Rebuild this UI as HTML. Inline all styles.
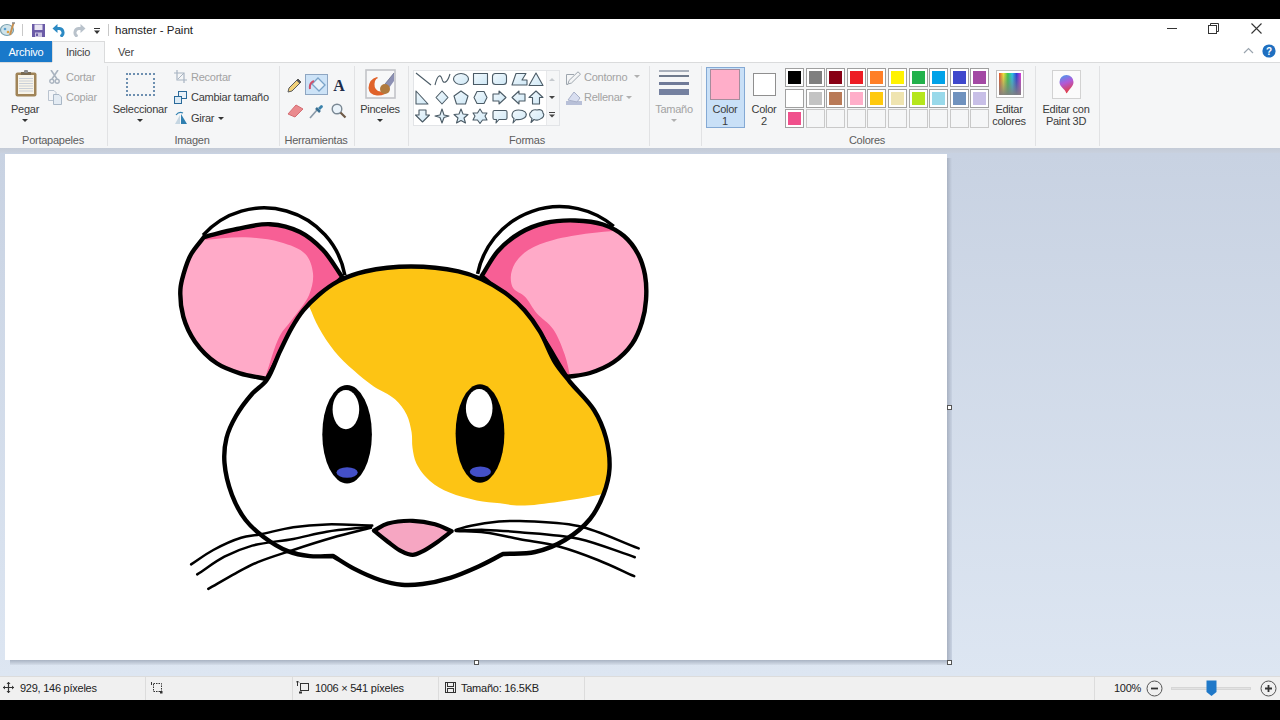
<!DOCTYPE html>
<html><head><meta charset="utf-8">
<style>
*{margin:0;padding:0;box-sizing:border-box}
html,body{width:1280px;height:720px;overflow:hidden;background:#000}
body{position:relative;font-family:"Liberation Sans",sans-serif;font-size:11px;color:#3b3b3b}
.a{position:absolute}
.t{position:absolute;white-space:nowrap;line-height:14px;height:14px;letter-spacing:-0.25px}
.c{text-align:center}
.dis{color:#a3a3a3}
.lbl{color:#5d5d5d}
.sep{position:absolute;width:1px;background:#e1e2e4;top:66px;height:80px}
.arr{position:absolute;width:0;height:0;border-left:3px solid transparent;border-right:3px solid transparent;border-top:3px solid #333}
.sw{position:absolute;width:19px;height:19px;border:1px solid #a0a0a0;background:#fff}
.sw i{position:absolute;left:2px;top:2px;right:2px;bottom:2px;display:block}
</style></head><body>
<!-- title bar -->
<div class="a" style="left:0;top:19px;width:1280px;height:22px;background:#fff"></div>
<!-- tabs row -->
<div class="a" style="left:0;top:41px;width:1280px;height:22px;background:#fff;border-bottom:1px solid #dadbdc"></div>
<div class="a" style="left:0;top:41px;width:52px;height:21px;background:#1979ca"></div>
<div class="t c" style="left:0;top:45px;width:52px;color:#fff">Archivo</div>
<div class="a" style="left:52px;top:41px;width:53px;height:23px;background:#f5f6f7;border:1px solid #dadbdc;border-bottom:none"></div>
<div class="t c" style="left:52px;top:45px;width:52px;color:#444">Inicio</div>
<div class="t c" style="left:104px;top:45px;width:44px;color:#444">Ver</div>
<!-- ribbon -->
<div class="a" style="left:0;top:63px;width:1280px;height:85px;background:#f5f6f7"></div>
<div class="a" style="left:52px;top:62px;width:50px;height:1px;background:#f5f6f7"></div>
<!-- band -->
<div class="a" style="left:0;top:148px;width:1280px;height:6px;background:#c9d0dc"></div>
<!-- canvas area -->
<div class="a" style="left:0;top:153px;width:1280px;height:523px;background:linear-gradient(#c8d2e2,#dde6f2)"></div>
<div class="a" style="left:0;top:148px;width:1280px;height:5px;background:linear-gradient(#c4cbd7,#c9d1de)"></div>
<div class="a" style="left:947px;top:158px;width:5px;height:507px;background:linear-gradient(90deg,#a9b2c2,#c8d2e2)"></div>
<div class="a" style="left:10px;top:660px;width:942px;height:5px;background:linear-gradient(#a9b3c3,#d5deea)"></div>
<div class="a" style="left:5px;top:154px;width:942px;height:506px;background:#fff"></div>
<div class="a" style="left:947px;top:405px;width:5px;height:5px;border:1px solid #555;background:#fff"></div>
<div class="a" style="left:474px;top:660px;width:5px;height:5px;border:1px solid #555;background:#fff"></div>
<div class="a" style="left:947px;top:660px;width:5px;height:5px;border:1px solid #555;background:#fff"></div>
<!-- status bar -->
<div class="a" style="left:0;top:676px;width:1280px;height:24px;background:#f0f0f0;border-top:1px solid #dcdcdc"></div>
<div class="a" style="left:0;top:700px;width:1280px;height:20px;background:#000"></div>
<!-- title bar content -->
<svg class="a" style="left:0;top:21px" width="16" height="16" viewBox="0 0 16 16"><ellipse cx="7" cy="9" rx="6.5" ry="5.5" fill="#cfe3ea" stroke="#7aa0ae" stroke-width="1.2"/><circle cx="5" cy="8" r="1.3" fill="#5aa0d0"/><circle cx="8" cy="11" r="1.3" fill="#e0a040"/><path d="M10 14 L13.5 2" stroke="#c89050" stroke-width="2"/><path d="M12 2 L15 2" stroke="#888" stroke-width="1.5"/></svg>
<div class="a" style="left:22px;top:24px;width:1px;height:12px;background:#c8c8c8"></div>
<svg class="a" style="left:32px;top:24px" width="13" height="13" viewBox="0 0 13 13"><rect x="0" y="0" width="13" height="13" fill="#6b5ba7"/><rect x="2.5" y="0.5" width="8" height="5.5" fill="#e8e4f2"/><rect x="3" y="8.5" width="7" height="4.5" fill="#c9c2e0"/><rect x="4" y="9.5" width="2" height="2.5" fill="#6b5ba7"/></svg>
<svg class="a" style="left:52px;top:23px" width="14" height="14" viewBox="0 0 14 14"><path d="M0.5 5.5 L5.5 1 V10Z" fill="#2c8ac4"/><path d="M4 5.5 H7.5 A4.2 4.2 0 0 1 8.5 13.5" stroke="#2c8ac4" stroke-width="3" fill="none"/></svg>
<svg class="a" style="left:72px;top:23px" width="14" height="14" viewBox="0 0 14 14"><path d="M13.5 5.5 L8.5 1 V10Z" fill="#b9c2cb"/><path d="M10 5.5 H6.5 A4.2 4.2 0 0 0 5.5 13.5" stroke="#b9c2cb" stroke-width="3" fill="none"/></svg>
<svg class="a" style="left:93px;top:27px" width="8" height="8" viewBox="0 0 8 8"><rect x="1" y="1" width="6" height="1" fill="#333"/><path d="M1 3.5 H7 L4 7Z" fill="#333"/></svg>
<div class="a" style="left:108px;top:24px;width:1px;height:12px;background:#c8c8c8"></div>
<div class="t" style="left:115px;top:23px;font-size:11.5px;color:#222;letter-spacing:0">hamster - Paint</div>
<!-- window controls -->
<div class="a" style="left:1167px;top:28px;width:10px;height:1px;background:#333"></div>
<svg class="a" style="left:1208px;top:23px" width="11" height="11" viewBox="0 0 11 11"><rect x="0.5" y="2.5" width="8" height="8" fill="none" stroke="#333"/><path d="M2.5 2.5 V0.5 H10.5 V8.5 H8.5" fill="none" stroke="#333"/></svg>
<svg class="a" style="left:1251px;top:23px" width="11" height="11" viewBox="0 0 11 11"><path d="M0.5 0.5 L10.5 10.5 M10.5 0.5 L0.5 10.5" stroke="#333" stroke-width="1.1"/></svg>
<svg class="a" style="left:1243px;top:47px" width="11" height="7" viewBox="0 0 11 7"><path d="M1 6 L5.5 1.5 L10 6" fill="none" stroke="#9aa4ae" stroke-width="1.2"/></svg>
<svg class="a" style="left:1262px;top:44px" width="14" height="14" viewBox="0 0 14 14"><circle cx="7" cy="7" r="6.6" fill="#1f6fc0"/><text x="7" y="11" font-family="Liberation Sans" font-weight="bold" font-size="10" fill="#fff" text-anchor="middle">?</text></svg>
<!-- ribbon separators -->
<div class="sep" style="left:107px"></div>
<div class="sep" style="left:279px"></div>
<div class="sep" style="left:354px"></div>
<div class="sep" style="left:408px"></div>
<div class="sep" style="left:649px"></div>
<div class="sep" style="left:701px"></div>
<div class="sep" style="left:1035px"></div>
<div class="sep" style="left:1099px"></div>
<!-- group labels -->
<div class="t c lbl" style="left:3px;top:133px;width:100px">Portapapeles</div>
<div class="t c lbl" style="left:142px;top:133px;width:100px">Imagen</div>
<div class="t c lbl" style="left:266px;top:133px;width:100px">Herramientas</div>
<div class="t c lbl" style="left:477px;top:133px;width:100px">Formas</div>
<div class="t c lbl" style="left:817px;top:133px;width:100px">Colores</div>
<!-- Portapapeles -->
<svg class="a" style="left:14px;top:70px" width="24" height="28" viewBox="0 0 24 28"><rect x="1.5" y="2.5" width="21" height="24" rx="2" fill="#a08458"/><rect x="4" y="5" width="16" height="19" fill="#f7f3e8"/><path d="M5 8.5 H19 M5 11 H19 M5 13.5 H19 M5 16 H19 M5 18.5 H19 M5 21 H19" stroke="#c9cfd8" stroke-width="1"/><rect x="7" y="2" width="10" height="3" fill="#7a6a50"/><rect x="10" y="0" width="4" height="3" rx="1" fill="#8a8a8a"/></svg>
<div class="t c" style="left:0;top:102px;width:50px">Pegar</div>
<div class="arr" style="left:22px;top:119px"></div>
<svg class="a" style="left:49px;top:70px" width="11" height="14" viewBox="0 0 11 14"><path d="M2 0 L8 9 M9 0 L3 9" stroke="#a9b3bf" stroke-width="1.6"/><circle cx="2.8" cy="11.2" r="2" fill="none" stroke="#a9b3bf" stroke-width="1.4"/><circle cx="8.2" cy="11.2" r="2" fill="none" stroke="#a9b3bf" stroke-width="1.4"/></svg>
<div class="t dis" style="left:66px;top:70px">Cortar</div>
<svg class="a" style="left:48px;top:90px" width="14" height="15" viewBox="0 0 14 15"><path d="M0.5 0.5 H6 L8 2.5 V10.5 H0.5Z" fill="#f3f5f8" stroke="#b9c3cf"/><path d="M5.5 4.5 H11 L13.5 7 V14.5 H5.5Z" fill="#e3ebf3" stroke="#a9b7c6"/></svg>
<div class="t dis" style="left:66px;top:90px">Copiar</div>
<!-- Imagen -->
<div class="a" style="left:126px;top:73px;width:29px;height:23px;border:2px dotted #6d8fb0"></div>
<div class="t c" style="left:100px;top:102px;width:80px">Seleccionar</div>
<div class="arr" style="left:137px;top:119px"></div>
<svg class="a" style="left:174px;top:70px" width="13" height="13" viewBox="0 0 13 13"><path d="M3 0 V10 H13 M0 3 H10 V13" fill="none" stroke="#a8b4c2" stroke-width="1.2"/><path d="M4 9 L10 3" stroke="#a8b4c2" stroke-width="1"/></svg>
<div class="t dis" style="left:191px;top:70px">Recortar</div>
<svg class="a" style="left:174px;top:91px" width="13" height="13" viewBox="0 0 13 13"><rect x="4.5" y="0.5" width="8" height="7" fill="#e9f1f8" stroke="#2a6a9a"/><rect x="0.5" y="5.5" width="7" height="7" fill="#ddebf5" stroke="#2a6a9a"/></svg>
<div class="t" style="left:191px;top:90px">Cambiar tamaño</div>
<svg class="a" style="left:174px;top:111px" width="14" height="14" viewBox="0 0 14 14"><path d="M7 3 L13 13 H7Z" fill="#2f7fb0"/><path d="M6 4 L1 13 H6Z" fill="#c5d6e2"/><path d="M2 4 Q5 0 9 2" fill="none" stroke="#2f7fb0" stroke-width="1.2"/></svg>
<div class="t" style="left:191px;top:111px">Girar</div>
<div class="arr" style="left:218px;top:117px"></div>
<!-- Herramientas -->
<svg class="a" style="left:287px;top:78px" width="15" height="15" viewBox="0 0 15 15"><path d="M1 14 L2 10 L11 1 L14 4 L5 13Z" fill="#f2d27a" stroke="#5a5a5a" stroke-width="1"/><path d="M11 1 L14 4 L12.5 5.5 L9.5 2.5Z" fill="#555"/></svg>
<div class="a" style="left:305px;top:74px;width:23px;height:21px;background:#cde3f7;border:1px solid #8ea6c2"></div>
<svg class="a" style="left:308px;top:77px" width="18" height="16" viewBox="0 0 18 16"><path d="M10 1 L17 8 L11 14 L4 7Z" fill="#e8f2fa" stroke="#7aa3c8" stroke-width="1.3"/><path d="M2 12 Q1 6 6 4" fill="none" stroke="#d0506a" stroke-width="2"/></svg>
<svg class="a" style="left:332px;top:78px" width="14" height="13" viewBox="0 0 14 13"><text x="7" y="12.5" font-family="Liberation Serif" font-weight="bold" font-size="16" fill="#1e2d4a" text-anchor="middle">A</text></svg>
<svg class="a" style="left:287px;top:104px" width="17" height="14" viewBox="0 0 17 14"><path d="M1 10 L9 1 L16 5 L8 13Z" fill="#ea8a8e" stroke="#d46c72" stroke-width="1"/></svg>
<svg class="a" style="left:309px;top:103px" width="16" height="16" viewBox="0 0 16 16"><path d="M1 15 L8 7" stroke="#8a9aa8" stroke-width="1.6"/><path d="M7 5 L11 9" stroke="#3a6f92" stroke-width="2.5"/><path d="M9 5 L12 2 A2 2 0 0 1 14 4 L11 7Z" fill="#3b82ab"/></svg>
<svg class="a" style="left:331px;top:103px" width="16" height="16" viewBox="0 0 16 16"><circle cx="6" cy="6" r="4.8" fill="#eaf3fa" stroke="#7a8894" stroke-width="1.4"/><path d="M9.5 9.5 L14.5 14.5" stroke="#6e5a48" stroke-width="2.2"/></svg>
<!-- Pinceles -->
<svg class="a" style="left:365px;top:69px" width="31" height="30" viewBox="0 0 31 30"><rect x="1" y="1" width="29" height="28" fill="#f7f8f9" stroke="#c2c4c8" stroke-width="1.6"/><path d="M29 4 L20 15 L24 19 L29 12Z" fill="#8c90b4"/><path d="M29 4 L20 15" stroke="#6a708c" stroke-width="0.8"/><path d="M12 8 Q4 10 3.5 19 Q4 26 12 26.5 Q20 27 24 21 Q19 24 13 22 Q8 19 10 12 Q11 9.5 13 9Z" fill="#e0622a"/><circle cx="20" cy="20" r="5" fill="#b07a3e"/></svg>
<div class="t c" style="left:350px;top:102px;width:60px">Pinceles</div>
<div class="arr" style="left:377px;top:119px"></div>
<!-- Formas gallery -->
<div class="a" style="left:413px;top:70px;width:147px;height:56px;border:1px solid #e2e4e7;background:#fff"></div>
<div class="a" style="left:546px;top:71px;width:13px;height:54px;background:#f5f6f7;border-left:1px solid #e8e9eb"></div>
<svg class="a" style="left:414px;top:70px" width="146" height="56" viewBox="0 0 146 56">
<defs><linearGradient id="sg" x1="0" y1="0" x2="1" y2="1"><stop offset="0" stop-color="#f2f9fd"/><stop offset="1" stop-color="#cfe8f6"/></linearGradient></defs>
<g fill="url(#sg)" stroke="#4b5b66" stroke-width="1.1" stroke-linejoin="round">
<path d="M2 3 L17 15" fill="none"/>
<path d="M21 15 C24 3 27 5 28 9 C29 14 33 14 36 4" fill="none"/>
<ellipse cx="47" cy="9" rx="7.5" ry="5.5"/>
<rect x="59.5" y="3.5" width="14" height="11"/>
<rect x="78.5" y="3.5" width="14" height="11" rx="3"/>
<path d="M98 15 L102 3.5 H112 L108 10 H113 V15Z"/>
<path d="M115 15.5 L122 3 L129 15.5Z"/>
<path d="M2 21 L2 34 L14 34Z"/>
<path d="M28 21 L34 27.5 L28 34 L22 27.5Z"/>
<path d="M47 21 L54 26 L51.5 34 L42.5 34 L40 26Z"/>
<path d="M62 21.5 L69 21.5 L72 27.5 L69 33.5 L62 33.5 L59 27.5Z" transform="translate(1,0)"/>
<path d="M79 24 H85 V21 L92 27.5 L85 34 V31 H79Z"/>
<path d="M111 24 H105 V21 L98 27.5 L105 34 V31 H111Z"/>
<path d="M122 21 L129 27.5 H125.5 V34 H118.5 V27.5 H115Z"/>
<path d="M5 40 H12 V45 H15.5 L8.5 52 L1.5 45 H5Z"/>
<path d="M28 39 L30 45 L35 46 L30 47.5 L28 53 L26 47.5 L21 46 L26 45Z"/>
<path d="M47 39 L49 44 L54 44.5 L50 48 L51.5 53 L47 50.5 L42.5 53 L44 48 L40 44.5 L45 44Z"/>
<path d="M66 39 L68.5 43 L73 43 L71 46 L73 50 L68.5 50 L66 53.5 L63.5 50 L59 50 L61 46 L59 43 L63.5 43Z"/>
<path d="M80.5 40.5 H91.5 Q93 40.5 93 42 V48 Q93 49.5 91.5 49.5 H85 L82 53 L82.5 49.5 H80.5 Q79 49.5 79 48 V42 Q79 40.5 80.5 40.5Z"/>
<path d="M104.5 40 C111 40 113 43 112 46 C111 49 106 50 102 49.5 L99 53 L100 48.5 C97 47 97 40 104.5 40Z"/>
<path d="M123 40 C126 39 129 40 129 43 C131 45 129 48 127 48.5 C125 51 121 50 120 49.5 L117 52.5 L118 48.5 C115 47 115 43 117 42 C118 40 121 39.5 123 40Z"/>
</g>
<path d="M135 11 L138 8 L141 11Z" fill="#c5c9ce"/>
<path d="M135 26 L141 26 L138 29Z" fill="#444"/>
<rect x="135" y="42" width="6" height="1" fill="#444"/><path d="M135 44.5 L141 44.5 L138 47.5Z" fill="#444"/>
</svg>
<!-- Contorno / Rellenar -->
<svg class="a" style="left:566px;top:71px" width="15" height="14" viewBox="0 0 15 14"><path d="M0.5 13.5 V3.5 H8 M0.5 13.5 H2" fill="none" stroke="#9ea6ae" stroke-width="1"/><path d="M2 13 L3 9.5 L12 0.8 L14.5 3.2 L5.5 12Z" fill="#f4f5f6" stroke="#9ea6ae" stroke-width="1"/></svg>
<div class="t dis" style="left:584px;top:70px">Contorno</div>
<div class="arr" style="left:634px;top:75px;border-top-color:#b0b0b0"></div>
<svg class="a" style="left:566px;top:90px" width="16" height="15" viewBox="0 0 16 15"><rect x="0" y="11" width="16" height="4" fill="#b8c0d8"/><path d="M2 10 L8 2 L14 8 L11 12Z" fill="#d8def0" stroke="#a8b0c8" stroke-width="1"/></svg>
<div class="t dis" style="left:584px;top:90px">Rellenar</div>
<div class="arr" style="left:626px;top:96px;border-top-color:#b0b0b0"></div>
<!-- Tamaño -->
<div class="a" style="left:659px;top:70px;width:30px;height:2px;background:#a9b0bb"></div>
<div class="a" style="left:659px;top:75px;width:30px;height:2px;background:#6f7a8c"></div>
<div class="a" style="left:659px;top:82px;width:30px;height:3px;background:#6f7a98"></div>
<div class="a" style="left:659px;top:89px;width:30px;height:6px;background:#7581a0"></div>
<div class="t c dis" style="left:644px;top:102px;width:60px">Tamaño</div>
<div class="arr" style="left:671px;top:119px;border-top-color:#b0b0b0"></div>
<!-- Color 1 / 2 -->
<div class="a" style="left:706px;top:67px;width:39px;height:61px;background:#c9e0f7;border:1px solid #84a9d4"></div>
<div class="a" style="left:710px;top:69px;width:30px;height:31px;background:#ffaec9;border:1px solid #a68c9c"></div>
<div class="t c" style="left:700px;top:102px;width:50px">Color</div>
<div class="t c" style="left:700px;top:114px;width:50px">1</div>
<div class="a" style="left:753px;top:73px;width:23px;height:23px;background:#fff;border:1px solid #8f8f8f"></div>
<div class="t c" style="left:739px;top:102px;width:50px">Color</div>
<div class="t c" style="left:739px;top:114px;width:50px">2</div>
<div class="sw" style="left:785px;top:68px"><i style="background:#000000"></i></div>
<div class="sw" style="left:806px;top:68px"><i style="background:#7f7f7f"></i></div>
<div class="sw" style="left:826px;top:68px"><i style="background:#880015"></i></div>
<div class="sw" style="left:847px;top:68px"><i style="background:#ed1c24"></i></div>
<div class="sw" style="left:867px;top:68px"><i style="background:#ff7f27"></i></div>
<div class="sw" style="left:888px;top:68px"><i style="background:#fff200"></i></div>
<div class="sw" style="left:909px;top:68px"><i style="background:#22b14c"></i></div>
<div class="sw" style="left:929px;top:68px"><i style="background:#00a2e8"></i></div>
<div class="sw" style="left:950px;top:68px"><i style="background:#3f48cc"></i></div>
<div class="sw" style="left:970px;top:68px"><i style="background:#a349a4"></i></div>
<div class="sw" style="left:785px;top:89px"><i style="background:#ffffff"></i></div>
<div class="sw" style="left:806px;top:89px"><i style="background:#c3c3c3"></i></div>
<div class="sw" style="left:826px;top:89px"><i style="background:#b97a57"></i></div>
<div class="sw" style="left:847px;top:89px"><i style="background:#ffaec9"></i></div>
<div class="sw" style="left:867px;top:89px"><i style="background:#ffc90e"></i></div>
<div class="sw" style="left:888px;top:89px"><i style="background:#efe4b0"></i></div>
<div class="sw" style="left:909px;top:89px"><i style="background:#b5e61d"></i></div>
<div class="sw" style="left:929px;top:89px"><i style="background:#99d9ea"></i></div>
<div class="sw" style="left:950px;top:89px"><i style="background:#7092be"></i></div>
<div class="sw" style="left:970px;top:89px"><i style="background:#c8bfe7"></i></div>
<div class="sw" style="left:785px;top:109px"><i style="background:#f0508c"></i></div>
<div class="sw" style="left:806px;top:109px;background:#f5f6f7;border-color:#c9c9c9"></div>
<div class="sw" style="left:826px;top:109px;background:#f5f6f7;border-color:#c9c9c9"></div>
<div class="sw" style="left:847px;top:109px;background:#f5f6f7;border-color:#c9c9c9"></div>
<div class="sw" style="left:867px;top:109px;background:#f5f6f7;border-color:#c9c9c9"></div>
<div class="sw" style="left:888px;top:109px;background:#f5f6f7;border-color:#c9c9c9"></div>
<div class="sw" style="left:909px;top:109px;background:#f5f6f7;border-color:#c9c9c9"></div>
<div class="sw" style="left:929px;top:109px;background:#f5f6f7;border-color:#c9c9c9"></div>
<div class="sw" style="left:950px;top:109px;background:#f5f6f7;border-color:#c9c9c9"></div>
<div class="sw" style="left:970px;top:109px;background:#f5f6f7;border-color:#c9c9c9"></div>
<!-- Editar colores -->
<svg class="a" style="left:996px;top:70px" width="28" height="28" viewBox="0 0 28 28"><defs><linearGradient id="rb" x1="0" y1="0" x2="1" y2="0"><stop offset="0" stop-color="#e34b2a"/><stop offset="0.2" stop-color="#f2e23a"/><stop offset="0.4" stop-color="#3ac84a"/><stop offset="0.6" stop-color="#29c4e8"/><stop offset="0.8" stop-color="#2b3ad8"/><stop offset="1" stop-color="#e23ad8"/></linearGradient><linearGradient id="gr" x1="0" y1="0" x2="0" y2="1"><stop offset="0" stop-color="#808080" stop-opacity="0"/><stop offset="1" stop-color="#808080" stop-opacity="0.95"/></linearGradient></defs><rect x="0.5" y="0.5" width="27" height="27" fill="#fff" stroke="#c0c0c0"/><rect x="3" y="3" width="22" height="22" fill="url(#rb)"/><rect x="3" y="3" width="22" height="22" fill="url(#gr)"/></svg>
<div class="t c" style="left:979px;top:102px;width:60px">Editar</div>
<div class="t c" style="left:979px;top:114px;width:60px">colores</div>
<!-- Paint 3D -->
<svg class="a" style="left:1052px;top:70px" width="29" height="29" viewBox="0 0 29 29"><defs><linearGradient id="p3" x1="0" y1="0" x2="0.3" y2="1"><stop offset="0" stop-color="#3fa0f0"/><stop offset="0.5" stop-color="#b05ad8"/><stop offset="1" stop-color="#e04050"/></linearGradient></defs><rect x="0.5" y="0.5" width="28" height="28" fill="#fbfbfb" stroke="#d2d2d2"/><path d="M14.5 5 A7 7 0 0 1 21.5 12 C21.5 16 18 18 15 23 C14.5 23.5 14 23 14 22.5 C13 19 7.5 17 7.5 12 A7 7 0 0 1 14.5 5Z" fill="url(#p3)"/></svg>
<div class="t c" style="left:1036px;top:102px;width:60px">Editar con</div>
<div class="t c" style="left:1036px;top:114px;width:60px">Paint 3D</div>
<!-- status bar -->
<svg class="a" style="left:3px;top:682px" width="11" height="11" viewBox="0 0 11 11"><path d="M5.5 0 V11 M0 5.5 H11" stroke="#333" stroke-width="1.2"/><path d="M5.5 0 L3.5 2 H7.5Z M5.5 11 L3.5 9 H7.5Z M0 5.5 L2 3.5 V7.5Z M11 5.5 L9 3.5 V7.5Z" fill="#333"/></svg>
<div class="t" style="left:20px;top:681px;color:#222">929, 146 píxeles</div>
<div class="a" style="left:145px;top:677px;width:1px;height:23px;background:#dcdcdc"></div>
<svg class="a" style="left:151px;top:682px" width="12" height="12" viewBox="0 0 12 12"><path d="M0.5 0 V3" stroke="#333"/><rect x="2.5" y="1.5" width="8" height="8" fill="none" stroke="#333" stroke-dasharray="1.5 1"/><rect x="9" y="9" width="2.5" height="2.5" fill="#333"/></svg>
<div class="a" style="left:292px;top:677px;width:1px;height:23px;background:#dcdcdc"></div>
<svg class="a" style="left:296px;top:681px" width="14" height="13" viewBox="0 0 14 13"><path d="M1.5 0 V5 M0 1.5 L1.5 0 L3 1.5" fill="none" stroke="#333"/><rect x="4.5" y="2.5" width="8" height="7" fill="none" stroke="#333"/><rect x="3" y="10.5" width="3" height="2" fill="#333"/></svg>
<div class="t" style="left:315px;top:681px;color:#222">1006 × 541 píxeles</div>
<div class="a" style="left:438px;top:677px;width:1px;height:23px;background:#dcdcdc"></div>
<svg class="a" style="left:445px;top:682px" width="11" height="11" viewBox="0 0 11 11"><rect x="0.5" y="0.5" width="10" height="10" fill="none" stroke="#333"/><rect x="2.5" y="0.5" width="6" height="4" fill="none" stroke="#333"/><rect x="2.5" y="6.5" width="6" height="4" fill="none" stroke="#333"/></svg>
<div class="t" style="left:461px;top:681px;color:#222">Tamaño: 16.5KB</div>
<div class="a" style="left:584px;top:677px;width:1px;height:23px;background:#dcdcdc"></div>
<div class="a" style="left:1094px;top:677px;width:1px;height:23px;background:#dcdcdc"></div>
<div class="t" style="left:1114px;top:681px;color:#222">100%</div>
<svg class="a" style="left:1146px;top:680px" width="17" height="17" viewBox="0 0 17 17"><circle cx="8.5" cy="8.5" r="7.5" fill="none" stroke="#555" stroke-width="1"/><path d="M5 8.5 H12" stroke="#333" stroke-width="1.8"/></svg>
<div class="a" style="left:1171px;top:687px;width:80px;height:3px;background:#e2e2e2;border:1px solid #d6d6d6"></div>
<svg class="a" style="left:1206px;top:680px" width="11" height="17" viewBox="0 0 11 17"><path d="M0.5 0.5 H10.5 V12 L5.5 16 L0.5 12Z" fill="#1f78c8"/></svg>
<svg class="a" style="left:1260px;top:680px" width="17" height="17" viewBox="0 0 17 17"><circle cx="8.5" cy="8.5" r="7.5" fill="none" stroke="#555" stroke-width="1"/><path d="M5 8.5 H12 M8.5 5 V12" stroke="#333" stroke-width="1.8"/></svg>
<div id="hamster"><svg class="a" style="left:0;top:0" width="1280" height="720" viewBox="0 0 1280 720">
<defs><clipPath id="hc"><path d="M503.0,554.0 C494.7,558.2 486.6,562.8 478.0,566.7 C469.1,570.7 459.7,574.9 450.3,577.8 C441.2,580.6 431.1,582.9 422.5,584.0 C415.1,584.9 408.7,585.3 401.7,584.7 C394.5,584.1 387.4,582.4 380.0,580.0 C371.7,577.3 362.4,573.0 354.4,568.9 C346.8,565.0 340.1,560.3 333.0,556.0 C325.3,556.0 317.6,556.9 310.0,556.1 C302.5,555.3 295.2,554.0 287.8,551.1 C279.6,547.9 270.5,542.1 263.3,536.7 C256.6,531.7 250.7,526.6 245.6,520.0 C240.1,512.9 235.5,504.1 232.0,495.0 C228.3,485.2 225.3,473.1 224.5,463.0 C223.8,454.2 224.5,445.9 226.5,438.0 C228.4,430.3 231.9,423.1 236.0,416.0 C240.3,408.4 246.5,400.3 252.0,394.0 C256.8,388.6 262.4,386.0 266.7,380.0 C272.1,372.5 275.6,360.3 280.0,351.2 C284.0,343.0 287.6,334.9 291.7,327.8 C295.4,321.4 298.8,315.8 303.3,310.3 C307.9,304.7 313.2,299.5 318.9,294.7 C324.8,289.7 331.1,284.9 338.4,281.1 C346.3,277.0 354.8,273.9 365.0,271.5 C378.1,268.5 395.5,266.5 411.0,266.5 C426.7,266.5 445.5,268.6 458.4,271.4 C467.7,273.4 474.1,275.8 481.7,279.2 C489.7,282.8 497.8,287.6 505.0,292.8 C512.1,298.0 518.7,303.8 524.5,310.3 C530.3,316.8 535.2,323.7 540.0,331.7 C545.5,340.8 549.5,353.4 555.0,362.3 C559.7,369.8 564.3,374.9 570.0,382.0 C577.0,390.6 587.9,400.2 594.0,410.0 C599.6,418.9 603.4,428.3 606.0,438.0 C608.6,447.8 610.0,458.9 609.5,468.6 C609.0,477.5 606.8,485.7 603.7,493.9 C600.4,502.5 596.1,511.5 590.0,519.0 C583.5,527.0 574.2,534.5 565.0,540.0 C555.9,545.5 545.4,549.7 535.0,552.0 C524.7,554.3 513.7,553.3 503.0,554.0Z"/></clipPath><clipPath id="lec"><path d="M204.0,237.0 C215.0,234.3 225.9,231.1 237.0,229.0 C248.0,226.9 259.3,223.6 270.0,224.2 C280.3,224.8 291.1,227.6 300.0,232.0 C308.7,236.3 316.1,242.8 323.0,250.0 C330.3,257.7 335.9,268.1 342.3,277.2 C328.2,291.5 312.3,303.7 300.0,320.0 C286.9,337.3 277.8,359.3 266.7,379.0 C257.8,377.1 248.5,376.0 240.0,373.3 C231.8,370.7 223.9,368.2 216.7,363.3 C208.8,358.0 200.6,349.7 195.0,341.7 C189.7,334.1 185.7,325.4 183.3,316.7 C180.9,308.0 180.0,297.3 180.4,289.4 C180.7,283.2 182.3,278.4 183.9,272.8 C185.7,266.8 187.6,260.5 190.8,254.7 C194.2,248.5 199.6,242.9 204.0,237.0Z"/></clipPath><clipPath id="rec"><path d="M481.7,276.0 C487.1,267.7 491.5,258.2 498.0,251.0 C504.3,243.9 512.0,237.7 520.0,233.0 C527.7,228.4 536.1,225.1 545.0,223.0 C554.4,220.8 565.2,220.2 575.0,220.5 C584.5,220.8 594.6,221.7 603.0,224.5 C610.8,227.1 618.1,231.0 624.0,236.0 C629.7,240.9 634.5,247.4 638.0,254.0 C641.5,260.5 643.6,267.6 645.0,275.0 C646.4,282.9 646.6,292.0 646.0,300.0 C645.5,307.6 644.3,314.8 642.0,322.0 C639.7,329.5 636.6,337.4 632.0,344.0 C627.2,350.9 620.4,357.5 613.4,362.3 C606.4,367.1 598.0,370.5 590.0,373.0 C582.4,375.4 574.5,375.7 566.7,377.0 C554.5,358.0 544.3,337.0 530.0,320.0 C515.9,303.4 497.8,290.7 481.7,276.0Z"/></clipPath></defs>
<path d="M203.1,235.2 A82,82 0 0 1 344.9,275.3" fill="none" stroke="#000" stroke-width="3.5"/>
<path d="M477.6,273.9 A83.7,83.7 0 0 1 613.7,226.4" fill="none" stroke="#000" stroke-width="3.5"/>
<path d="M204.0,237.0 C215.0,234.3 225.9,231.1 237.0,229.0 C248.0,226.9 259.3,223.6 270.0,224.2 C280.3,224.8 291.1,227.6 300.0,232.0 C308.7,236.3 316.1,242.8 323.0,250.0 C330.3,257.7 335.9,268.1 342.3,277.2 C328.2,291.5 312.3,303.7 300.0,320.0 C286.9,337.3 277.8,359.3 266.7,379.0 C257.8,377.1 248.5,376.0 240.0,373.3 C231.8,370.7 223.9,368.2 216.7,363.3 C208.8,358.0 200.6,349.7 195.0,341.7 C189.7,334.1 185.7,325.4 183.3,316.7 C180.9,308.0 180.0,297.3 180.4,289.4 C180.7,283.2 182.3,278.4 183.9,272.8 C185.7,266.8 187.6,260.5 190.8,254.7 C194.2,248.5 199.6,242.9 204.0,237.0Z" fill="#f75f95"/>
<path d="M203.1,240.0 C217.2,239.1 231.9,236.8 245.3,237.3 C257.6,237.8 270.0,239.1 280.5,242.2 C289.7,244.9 299.9,248.1 305.3,253.9 C310.0,258.9 312.3,266.6 313.0,273.3 C313.7,280.2 312.1,287.6 309.2,294.7 C305.7,303.2 297.0,312.6 291.7,320.0 C287.5,325.9 283.7,328.8 280.0,335.6 C274.4,346.0 270.0,363.9 265.0,378.0 C243.3,392.0 217.8,425.5 200.0,420.0 C176.9,412.8 144.7,331.9 150.0,300.0 C154.2,275.0 185.4,260.0 203.1,240.0Z" fill="#ffaac8" clip-path="url(#lec)"/>
<path d="M204.0,237.0 C215.0,234.3 225.9,231.1 237.0,229.0 C248.0,226.9 259.3,223.6 270.0,224.2 C280.3,224.8 291.1,227.6 300.0,232.0 C308.7,236.3 316.1,242.8 323.0,250.0 C330.3,257.7 335.9,268.1 342.3,277.2 C328.2,291.5 312.3,303.7 300.0,320.0 C286.9,337.3 277.8,359.3 266.7,379.0 C257.8,377.1 248.5,376.0 240.0,373.3 C231.8,370.7 223.9,368.2 216.7,363.3 C208.8,358.0 200.6,349.7 195.0,341.7 C189.7,334.1 185.7,325.4 183.3,316.7 C180.9,308.0 180.0,297.3 180.4,289.4 C180.7,283.2 182.3,278.4 183.9,272.8 C185.7,266.8 187.6,260.5 190.8,254.7 C194.2,248.5 199.6,242.9 204.0,237.0Z" fill="none" stroke="#000" stroke-width="4.4" stroke-linejoin="round"/>
<path d="M481.7,276.0 C487.1,267.7 491.5,258.2 498.0,251.0 C504.3,243.9 512.0,237.7 520.0,233.0 C527.7,228.4 536.1,225.1 545.0,223.0 C554.4,220.8 565.2,220.2 575.0,220.5 C584.5,220.8 594.6,221.7 603.0,224.5 C610.8,227.1 618.1,231.0 624.0,236.0 C629.7,240.9 634.5,247.4 638.0,254.0 C641.5,260.5 643.6,267.6 645.0,275.0 C646.4,282.9 646.6,292.0 646.0,300.0 C645.5,307.6 644.3,314.8 642.0,322.0 C639.7,329.5 636.6,337.4 632.0,344.0 C627.2,350.9 620.4,357.5 613.4,362.3 C606.4,367.1 598.0,370.5 590.0,373.0 C582.4,375.4 574.5,375.7 566.7,377.0 C554.5,358.0 544.3,337.0 530.0,320.0 C515.9,303.4 497.8,290.7 481.7,276.0Z" fill="#f75f95"/>
<path d="M617.0,230.8 C608.0,231.6 599.7,232.0 590.0,233.3 C578.7,234.9 564.2,236.9 553.3,240.0 C544.0,242.7 535.0,245.6 528.3,250.0 C522.7,253.7 517.9,258.5 515.0,263.3 C512.5,267.5 511.0,272.4 510.8,276.7 C510.6,280.7 511.2,285.1 513.3,288.3 C515.6,291.9 521.4,293.0 525.0,296.7 C529.3,301.0 532.2,308.0 536.7,313.3 C541.5,318.8 548.5,322.6 553.0,329.0 C558.0,336.1 561.7,346.0 564.7,354.5 C567.5,362.4 568.6,370.2 570.6,378.0 C587.1,392.0 603.0,422.4 620.0,420.0 C645.4,416.4 695.9,339.2 700.0,300.0 C703.5,266.1 677.5,205.1 660.0,200.0 C647.7,196.4 631.3,220.5 617.0,230.8Z" fill="#ffaac8" clip-path="url(#rec)"/>
<path d="M481.7,276.0 C487.1,267.7 491.5,258.2 498.0,251.0 C504.3,243.9 512.0,237.7 520.0,233.0 C527.7,228.4 536.1,225.1 545.0,223.0 C554.4,220.8 565.2,220.2 575.0,220.5 C584.5,220.8 594.6,221.7 603.0,224.5 C610.8,227.1 618.1,231.0 624.0,236.0 C629.7,240.9 634.5,247.4 638.0,254.0 C641.5,260.5 643.6,267.6 645.0,275.0 C646.4,282.9 646.6,292.0 646.0,300.0 C645.5,307.6 644.3,314.8 642.0,322.0 C639.7,329.5 636.6,337.4 632.0,344.0 C627.2,350.9 620.4,357.5 613.4,362.3 C606.4,367.1 598.0,370.5 590.0,373.0 C582.4,375.4 574.5,375.7 566.7,377.0 C554.5,358.0 544.3,337.0 530.0,320.0 C515.9,303.4 497.8,290.7 481.7,276.0Z" fill="none" stroke="#000" stroke-width="4.4" stroke-linejoin="round"/>
<path d="M503.0,554.0 C494.7,558.2 486.6,562.8 478.0,566.7 C469.1,570.7 459.7,574.9 450.3,577.8 C441.2,580.6 431.1,582.9 422.5,584.0 C415.1,584.9 408.7,585.3 401.7,584.7 C394.5,584.1 387.4,582.4 380.0,580.0 C371.7,577.3 362.4,573.0 354.4,568.9 C346.8,565.0 340.1,560.3 333.0,556.0 C325.3,556.0 317.6,556.9 310.0,556.1 C302.5,555.3 295.2,554.0 287.8,551.1 C279.6,547.9 270.5,542.1 263.3,536.7 C256.6,531.7 250.7,526.6 245.6,520.0 C240.1,512.9 235.5,504.1 232.0,495.0 C228.3,485.2 225.3,473.1 224.5,463.0 C223.8,454.2 224.5,445.9 226.5,438.0 C228.4,430.3 231.9,423.1 236.0,416.0 C240.3,408.4 246.5,400.3 252.0,394.0 C256.8,388.6 262.4,386.0 266.7,380.0 C272.1,372.5 275.6,360.3 280.0,351.2 C284.0,343.0 287.6,334.9 291.7,327.8 C295.4,321.4 298.8,315.8 303.3,310.3 C307.9,304.7 313.2,299.5 318.9,294.7 C324.8,289.7 331.1,284.9 338.4,281.1 C346.3,277.0 354.8,273.9 365.0,271.5 C378.1,268.5 395.5,266.5 411.0,266.5 C426.7,266.5 445.5,268.6 458.4,271.4 C467.7,273.4 474.1,275.8 481.7,279.2 C489.7,282.8 497.8,287.6 505.0,292.8 C512.1,298.0 518.7,303.8 524.5,310.3 C530.3,316.8 535.2,323.7 540.0,331.7 C545.5,340.8 549.5,353.4 555.0,362.3 C559.7,369.8 564.3,374.9 570.0,382.0 C577.0,390.6 587.9,400.2 594.0,410.0 C599.6,418.9 603.4,428.3 606.0,438.0 C608.6,447.8 610.0,458.9 609.5,468.6 C609.0,477.5 606.8,485.7 603.7,493.9 C600.4,502.5 596.1,511.5 590.0,519.0 C583.5,527.0 574.2,534.5 565.0,540.0 C555.9,545.5 545.4,549.7 535.0,552.0 C524.7,554.3 513.7,553.3 503.0,554.0Z" fill="#fff"/>
<path d="M309.2,306.4 C312.4,313.5 314.9,320.7 318.9,327.8 C323.2,335.6 328.6,344.0 334.5,351.2 C340.3,358.3 347.3,364.7 353.9,370.6 C360.2,376.3 366.6,381.4 373.4,386.2 C380.3,391.0 389.3,394.0 395.0,399.2 C400.0,403.7 403.9,409.1 406.7,414.7 C409.4,420.1 410.6,426.6 411.6,432.3 C412.5,437.6 411.7,442.7 412.5,447.8 C413.3,453.0 413.9,458.3 416.4,463.4 C419.3,469.4 424.5,476.1 430.0,480.9 C435.5,485.8 442.2,489.4 449.5,492.6 C457.6,496.1 467.9,498.6 476.7,500.4 C484.7,502.0 492.5,502.4 500.0,503.3 C506.9,504.1 512.2,505.5 520.0,505.6 C530.8,505.7 546.0,503.5 558.9,501.7 C571.9,499.9 584.6,497.6 597.8,494.9 C611.6,492.1 625.9,488.3 640.0,485.0 C646.7,456.7 664.1,431.5 660.0,400.0 C654.3,356.1 622.1,278.6 580.0,250.0 C536.5,220.5 451.7,221.8 400.0,230.0 C357.8,236.7 294.4,263.2 290.0,280.0 C287.7,288.8 302.8,297.6 309.2,306.4Z" fill="#fdc414" clip-path="url(#hc)"/>
<path d="M503.0,554.0 C494.7,558.2 486.6,562.8 478.0,566.7 C469.1,570.7 459.7,574.9 450.3,577.8 C441.2,580.6 431.1,582.9 422.5,584.0 C415.1,584.9 408.7,585.3 401.7,584.7 C394.5,584.1 387.4,582.4 380.0,580.0 C371.7,577.3 362.4,573.0 354.4,568.9 C346.8,565.0 340.1,560.3 333.0,556.0 C325.3,556.0 317.6,556.9 310.0,556.1 C302.5,555.3 295.2,554.0 287.8,551.1 C279.6,547.9 270.5,542.1 263.3,536.7 C256.6,531.7 250.7,526.6 245.6,520.0 C240.1,512.9 235.5,504.1 232.0,495.0 C228.3,485.2 225.3,473.1 224.5,463.0 C223.8,454.2 224.5,445.9 226.5,438.0 C228.4,430.3 231.9,423.1 236.0,416.0 C240.3,408.4 246.5,400.3 252.0,394.0 C256.8,388.6 262.4,386.0 266.7,380.0 C272.1,372.5 275.6,360.3 280.0,351.2 C284.0,343.0 287.6,334.9 291.7,327.8 C295.4,321.4 298.8,315.8 303.3,310.3 C307.9,304.7 313.2,299.5 318.9,294.7 C324.8,289.7 331.1,284.9 338.4,281.1 C346.3,277.0 354.8,273.9 365.0,271.5 C378.1,268.5 395.5,266.5 411.0,266.5 C426.7,266.5 445.5,268.6 458.4,271.4 C467.7,273.4 474.1,275.8 481.7,279.2 C489.7,282.8 497.8,287.6 505.0,292.8 C512.1,298.0 518.7,303.8 524.5,310.3 C530.3,316.8 535.2,323.7 540.0,331.7 C545.5,340.8 549.5,353.4 555.0,362.3 C559.7,369.8 564.3,374.9 570.0,382.0 C577.0,390.6 587.9,400.2 594.0,410.0 C599.6,418.9 603.4,428.3 606.0,438.0 C608.6,447.8 610.0,458.9 609.5,468.6 C609.0,477.5 606.8,485.7 603.7,493.9 C600.4,502.5 596.1,511.5 590.0,519.0 C583.5,527.0 574.2,534.5 565.0,540.0 C555.9,545.5 545.4,549.7 535.0,552.0 C524.7,554.3 513.7,553.3 503.0,554.0Z" fill="none" stroke="#000" stroke-width="4.4" stroke-linejoin="round"/>
<ellipse cx="347.1" cy="434.2" rx="24.8" ry="49.2" fill="#000"/>
<ellipse cx="480" cy="433.5" rx="24.4" ry="49.2" fill="#000"/>
<ellipse cx="345.9" cy="409.6" rx="13.3" ry="19.6" fill="#fff"/>
<ellipse cx="479.2" cy="408.4" rx="13.3" ry="19.3" fill="#fff"/>
<ellipse cx="347.1" cy="472.5" rx="10.6" ry="5.2" fill="#4450c8"/>
<ellipse cx="480.4" cy="471.7" rx="10.6" ry="5.2" fill="#4450c8"/>
<path d="M373.9,530.6 C378.5,528.3 382.3,525.2 387.8,523.6 C394.8,521.5 404.7,520.6 412.8,520.8 C420.4,521.0 428.2,522.4 435.0,524.3 C441.1,526.0 446.1,528.9 451.7,531.2 C447.1,534.7 442.6,538.4 437.8,541.7 C432.9,545.1 427.1,549.1 422.5,551.4 C419.0,553.1 416.2,554.8 412.8,554.9 C409.2,555.0 405.5,553.3 401.7,551.4 C397.2,549.2 392.4,545.1 387.8,541.7 C383.1,538.2 378.5,534.3 373.9,530.6Z" fill="#f6a6c2" stroke="#000" stroke-width="4.2" stroke-linejoin="round"/>
<path d="M372.2,525.6 C357.0,525.2 340.7,524.0 326.7,524.4 C314.7,524.7 304.4,525.5 293.3,527.2 C282.1,528.9 269.6,532.5 260.0,534.4 C252.8,535.8 247.9,535.7 241.1,537.8 C232.6,540.4 221.9,545.4 213.3,550.0 C205.3,554.3 198.5,559.6 191.1,564.4" fill="none" stroke="#000" stroke-width="2.5" stroke-linecap="round"/>
<path d="M371.0,526.7 C356.2,528.4 340.4,529.5 326.7,531.7 C314.7,533.7 305.0,536.7 293.3,538.9 C280.3,541.4 264.4,542.2 252.2,545.6 C241.9,548.5 233.4,552.0 224.4,556.7 C215.0,561.6 206.3,568.5 197.2,574.4" fill="none" stroke="#000" stroke-width="2.5" stroke-linecap="round"/>
<path d="M371.0,527.8 C358.1,531.1 345.1,534.1 332.2,537.8 C319.2,541.5 305.9,545.8 293.3,550.0 C281.2,554.0 268.1,557.9 257.8,562.2 C249.4,565.7 243.3,569.2 235.6,573.3 C226.9,578.0 217.4,583.7 208.3,588.9" fill="none" stroke="#000" stroke-width="2.5" stroke-linecap="round"/>
<path d="M455.8,529.9 C460.9,528.5 465.1,526.9 471.0,525.7 C478.9,524.0 490.2,522.3 498.9,521.5 C506.4,520.8 511.2,520.7 520.0,521.0 C534.6,521.5 559.1,521.7 578.4,526.0 C598.7,530.5 618.6,540.9 638.7,548.4" fill="none" stroke="#000" stroke-width="2.5" stroke-linecap="round"/>
<path d="M455.8,530.5 C465.5,530.3 474.8,529.7 485.0,529.9 C496.1,530.2 506.9,531.0 520.0,532.2 C537.0,533.7 559.3,534.6 578.4,538.7 C597.6,542.9 616.0,551.0 634.8,557.2" fill="none" stroke="#000" stroke-width="2.5" stroke-linecap="round"/>
<path d="M455.8,531.0 C465.5,531.5 474.9,531.4 485.0,532.6 C496.2,534.0 508.0,537.0 520.0,539.3 C532.6,541.7 546.1,543.1 558.9,546.5 C572.0,550.0 585.2,555.0 597.8,560.0 C610.2,564.9 622.1,570.8 634.2,576.2" fill="none" stroke="#000" stroke-width="2.5" stroke-linecap="round"/>
</svg></div>
</body></html>
